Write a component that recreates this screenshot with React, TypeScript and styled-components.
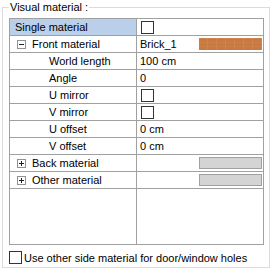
import React from 'react';
import styled, { createGlobalStyle } from 'styled-components';

const GlobalStyle = createGlobalStyle`
  body {
    margin: 0;
    background: #ffffff;
    font-family: "Liberation Sans", Arial, sans-serif;
    font-size: 11px;
    color: #000;
  }
`;

const Page = styled.div`
  width: 272px;
  height: 275px;
  padding: 0 2px;
  box-sizing: border-box;
`;

const Group = styled.fieldset`
  margin: 0;
  padding: 4px 5px 0 6px;
  border: 1px solid #dcdcdc;
  height: 268px;
  box-sizing: border-box;
  display: flex;
  flex-direction: column;
`;

const Legend = styled.legend`
  padding: 0 1px;
  margin-left: 0;
  font-size: 11px;
  line-height: 14px;
`;

const Grid = styled.div`
  border: 1px solid #a0a0a0;
  height: 227px;
  box-sizing: border-box;
  display: flex;
  flex-direction: column;
  background: linear-gradient(#a0a0a0, #a0a0a0) 126px 0 / 1px 100% no-repeat;
`;

const Row = styled.div`
  display: grid;
  grid-template-columns: 127px 1fr;
  height: 17px;
  border-bottom: 1px solid #a0a0a0;
  box-sizing: border-box;
`;

const Label = styled.div<{ $indent: number; $selected?: boolean }>`
  display: flex;
  align-items: center;
  padding-left: ${p => p.$indent}px;
  background: ${p => (p.$selected ? '#bad0ea' : 'transparent')};
  border-right: 1px solid #a0a0a0;
  white-space: nowrap;
`;

const Value = styled.div`
  display: flex;
  align-items: center;
  justify-content: space-between;
  padding: 0 1px 0 3px;
  white-space: nowrap;
`;

const Toggle = styled.span`
  width: 9px;
  height: 9px;
  box-sizing: border-box;
  border: 1px solid #919191;
  margin-right: 6px;
  display: flex;
  align-items: center;
  justify-content: center;
`;

const Check = styled.span`
  width: 13px;
  height: 13px;
  box-sizing: border-box;
  border: 1px solid #333;
  background: #fff;
  margin-left: 1px;
`;

const Swatch = styled.span`
  width: 63px;
  height: 12px;
  background-color: #c97a40;
  background-image:
    repeating-linear-gradient(90deg, transparent 0 8px, rgba(220, 150, 100, 0.35) 8px 9px),
    repeating-linear-gradient(0deg, transparent 0 3px, rgba(215, 140, 95, 0.3) 3px 4px);
`;

const GrayBox = styled.span`
  width: 63px;
  height: 12px;
  box-sizing: border-box;
  border: 1px solid #a0a0a0;
  background: #d4d4d4;
`;

const Footer = styled.label`
  display: flex;
  align-items: center;
  gap: 2px;
  margin-top: 6px;
  font-size: 11px;
  white-space: nowrap;
`;

const FooterCheck = styled(Check)`
  margin-left: 0;
`;

const PlusMinus = ({ open }: { open: boolean }) => (
  <Toggle>
    <svg width="7" height="7" viewBox="0 0 7 7">
      <rect x="1" y="3" width="5" height="1" fill="#222" />
      {!open && <rect x="3" y="1" width="1" height="5" fill="#222" />}
    </svg>
  </Toggle>
);

type Item = {
  label: string;
  indent: number;
  toggle?: 'open' | 'closed';
  selected?: boolean;
  value?: React.ReactNode;
};

const items: Item[] = [
  { label: 'Single material', indent: 5, selected: true, value: <Check /> },
  { label: 'Front material', indent: 7, toggle: 'open', value: <><span>Brick_1</span><Swatch /></> },
  { label: 'World length', indent: 39, value: '100 cm' },
  { label: 'Angle', indent: 39, value: '0' },
  { label: 'U mirror', indent: 39, value: <Check /> },
  { label: 'V mirror', indent: 39, value: <Check /> },
  { label: 'U offset', indent: 39, value: '0 cm' },
  { label: 'V offset', indent: 39, value: '0 cm' },
  { label: 'Back material', indent: 7, toggle: 'closed', value: <><span /><GrayBox /></> },
  { label: 'Other material', indent: 7, toggle: 'closed', value: <><span /><GrayBox /></> },
];

const App: React.FC = () => (
  <Page>
    <GlobalStyle />
    <Group>
      <Legend>Visual material :</Legend>
      <Grid>
        {items.map(item => (
          <Row key={item.label}>
            <Label $indent={item.indent} $selected={item.selected}>
              {item.toggle && <PlusMinus open={item.toggle === 'open'} />}
              {item.label}
            </Label>
            <Value>{item.value}</Value>
          </Row>
        ))}
      </Grid>
      <Footer>
        <FooterCheck />
        Use other side material for door/window holes
      </Footer>
    </Group>
  </Page>
);

export default App;
